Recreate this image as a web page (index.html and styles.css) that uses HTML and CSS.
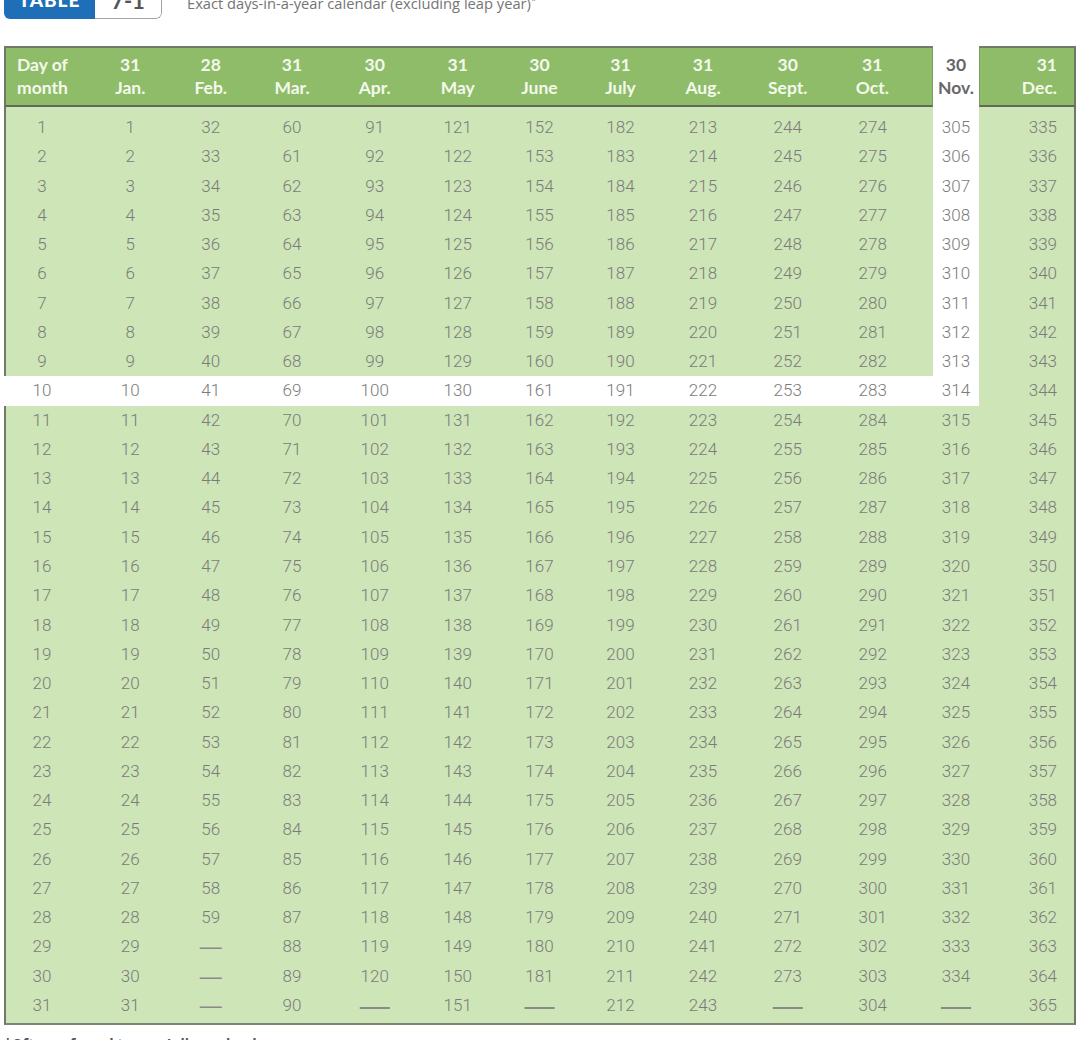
FILE: index.html
```html
<!DOCTYPE html>
<html lang="en">
<head>
<meta charset="utf-8">
<title>Table 7-1</title>
<link rel="stylesheet" href="styles.css">
</head>
<body>
<div class="page">
  <div class="caption">
    <div class="tag"><span class="tag-label">TABLE</span><span class="tag-num">7-1</span></div>
    <div class="caption-text">Exact days-in-a-year calendar (excluding leap year)<sup>*</sup></div>
  </div>
  <div class="grid">
    <div class="row head"><span>Day of<br>month</span><span>31<br>Jan.</span><span>28<br>Feb.</span><span>31<br>Mar.</span><span>30<br>Apr.</span><span>31<br>May</span><span>30<br>June</span><span>31<br>July</span><span>31<br>Aug.</span><span>30<br>Sept.</span><span>31<br>Oct.</span><span>30<br>Nov.</span><span>31<br>Dec.</span></div>
    <div class="row above first"><span>1</span><span>1</span><span>32</span><span>60</span><span>91</span><span>121</span><span>152</span><span>182</span><span>213</span><span>244</span><span>274</span><span>305</span><span>335</span></div>
    <div class="row above"><span>2</span><span>2</span><span>33</span><span>61</span><span>92</span><span>122</span><span>153</span><span>183</span><span>214</span><span>245</span><span>275</span><span>306</span><span>336</span></div>
    <div class="row above"><span>3</span><span>3</span><span>34</span><span>62</span><span>93</span><span>123</span><span>154</span><span>184</span><span>215</span><span>246</span><span>276</span><span>307</span><span>337</span></div>
    <div class="row above"><span>4</span><span>4</span><span>35</span><span>63</span><span>94</span><span>124</span><span>155</span><span>185</span><span>216</span><span>247</span><span>277</span><span>308</span><span>338</span></div>
    <div class="row above"><span>5</span><span>5</span><span>36</span><span>64</span><span>95</span><span>125</span><span>156</span><span>186</span><span>217</span><span>248</span><span>278</span><span>309</span><span>339</span></div>
    <div class="row above"><span>6</span><span>6</span><span>37</span><span>65</span><span>96</span><span>126</span><span>157</span><span>187</span><span>218</span><span>249</span><span>279</span><span>310</span><span>340</span></div>
    <div class="row above"><span>7</span><span>7</span><span>38</span><span>66</span><span>97</span><span>127</span><span>158</span><span>188</span><span>219</span><span>250</span><span>280</span><span>311</span><span>341</span></div>
    <div class="row above"><span>8</span><span>8</span><span>39</span><span>67</span><span>98</span><span>128</span><span>159</span><span>189</span><span>220</span><span>251</span><span>281</span><span>312</span><span>342</span></div>
    <div class="row above"><span>9</span><span>9</span><span>40</span><span>68</span><span>99</span><span>129</span><span>160</span><span>190</span><span>221</span><span>252</span><span>282</span><span>313</span><span>343</span></div>
    <div class="row hl"><span>10</span><span>10</span><span>41</span><span>69</span><span>100</span><span>130</span><span>161</span><span>191</span><span>222</span><span>253</span><span>283</span><span>314</span><span>344</span></div>
    <div class="row"><span>11</span><span>11</span><span>42</span><span>70</span><span>101</span><span>131</span><span>162</span><span>192</span><span>223</span><span>254</span><span>284</span><span>315</span><span>345</span></div>
    <div class="row"><span>12</span><span>12</span><span>43</span><span>71</span><span>102</span><span>132</span><span>163</span><span>193</span><span>224</span><span>255</span><span>285</span><span>316</span><span>346</span></div>
    <div class="row"><span>13</span><span>13</span><span>44</span><span>72</span><span>103</span><span>133</span><span>164</span><span>194</span><span>225</span><span>256</span><span>286</span><span>317</span><span>347</span></div>
    <div class="row"><span>14</span><span>14</span><span>45</span><span>73</span><span>104</span><span>134</span><span>165</span><span>195</span><span>226</span><span>257</span><span>287</span><span>318</span><span>348</span></div>
    <div class="row"><span>15</span><span>15</span><span>46</span><span>74</span><span>105</span><span>135</span><span>166</span><span>196</span><span>227</span><span>258</span><span>288</span><span>319</span><span>349</span></div>
    <div class="row"><span>16</span><span>16</span><span>47</span><span>75</span><span>106</span><span>136</span><span>167</span><span>197</span><span>228</span><span>259</span><span>289</span><span>320</span><span>350</span></div>
    <div class="row"><span>17</span><span>17</span><span>48</span><span>76</span><span>107</span><span>137</span><span>168</span><span>198</span><span>229</span><span>260</span><span>290</span><span>321</span><span>351</span></div>
    <div class="row"><span>18</span><span>18</span><span>49</span><span>77</span><span>108</span><span>138</span><span>169</span><span>199</span><span>230</span><span>261</span><span>291</span><span>322</span><span>352</span></div>
    <div class="row"><span>19</span><span>19</span><span>50</span><span>78</span><span>109</span><span>139</span><span>170</span><span>200</span><span>231</span><span>262</span><span>292</span><span>323</span><span>353</span></div>
    <div class="row"><span>20</span><span>20</span><span>51</span><span>79</span><span>110</span><span>140</span><span>171</span><span>201</span><span>232</span><span>263</span><span>293</span><span>324</span><span>354</span></div>
    <div class="row"><span>21</span><span>21</span><span>52</span><span>80</span><span>111</span><span>141</span><span>172</span><span>202</span><span>233</span><span>264</span><span>294</span><span>325</span><span>355</span></div>
    <div class="row"><span>22</span><span>22</span><span>53</span><span>81</span><span>112</span><span>142</span><span>173</span><span>203</span><span>234</span><span>265</span><span>295</span><span>326</span><span>356</span></div>
    <div class="row"><span>23</span><span>23</span><span>54</span><span>82</span><span>113</span><span>143</span><span>174</span><span>204</span><span>235</span><span>266</span><span>296</span><span>327</span><span>357</span></div>
    <div class="row"><span>24</span><span>24</span><span>55</span><span>83</span><span>114</span><span>144</span><span>175</span><span>205</span><span>236</span><span>267</span><span>297</span><span>328</span><span>358</span></div>
    <div class="row"><span>25</span><span>25</span><span>56</span><span>84</span><span>115</span><span>145</span><span>176</span><span>206</span><span>237</span><span>268</span><span>298</span><span>329</span><span>359</span></div>
    <div class="row"><span>26</span><span>26</span><span>57</span><span>85</span><span>116</span><span>146</span><span>177</span><span>207</span><span>238</span><span>269</span><span>299</span><span>330</span><span>360</span></div>
    <div class="row"><span>27</span><span>27</span><span>58</span><span>86</span><span>117</span><span>147</span><span>178</span><span>208</span><span>239</span><span>270</span><span>300</span><span>331</span><span>361</span></div>
    <div class="row"><span>28</span><span>28</span><span>59</span><span>87</span><span>118</span><span>148</span><span>179</span><span>209</span><span>240</span><span>271</span><span>301</span><span>332</span><span>362</span></div>
    <div class="row"><span>29</span><span>29</span><span class="dash">—</span><span>88</span><span>119</span><span>149</span><span>180</span><span>210</span><span>241</span><span>272</span><span>302</span><span>333</span><span>363</span></div>
    <div class="row"><span>30</span><span>30</span><span class="dash">—</span><span>89</span><span>120</span><span>150</span><span>181</span><span>211</span><span>242</span><span>273</span><span>303</span><span>334</span><span>364</span></div>
    <div class="row last"><span>31</span><span>31</span><span class="dash">—</span><span>90</span><span class="long">—</span><span>151</span><span class="long">—</span><span>212</span><span>243</span><span class="long">—</span><span>304</span><span class="long">—</span><span>365</span></div>
  </div>
  <p class="footnote">*Often referred to as a Julian calendar.</p>
</div>
</body>
</html>
```

FILE: styles.css
```css
html, body {
  margin: 0;
  padding: 0;
  background: #ffffff;
}

.page {
  padding-left: 4px;
  width: 1072px;
  font-family: Roboto, "Liberation Sans", sans-serif;
}

/* caption */
.caption {
  display: flex;
  align-items: flex-start;
  margin-top: -15px;
  height: 34px;
}

.tag {
  display: flex;
  height: 34px;
  border-radius: 0 0 6px 6px;
  overflow: hidden;
  box-sizing: border-box;
}

.tag-label {
  width: 91px;
  background: #1f6fb8;
  color: #ffffff;
  font-family: Lato, "Liberation Sans", sans-serif;
  font-weight: 900;
  font-size: 19px;
  letter-spacing: 1px;
  text-align: center;
  line-height: 30px;
}

.tag-num {
  width: 67px;
  box-sizing: border-box;
  background: #ffffff;
  border: 1.5px solid #a3a3a3;
  border-left: none;
  border-radius: 0 0 6px 0;
  color: #555555;
  font-family: Lato, "Liberation Sans", sans-serif;
  font-weight: 700;
  font-size: 22px;
  text-align: center;
  line-height: 30px;
}

.caption-text {
  margin-left: 25px;
  font-family: "Open Sans", "Liberation Sans", sans-serif;
  font-size: 14.7px;
  color: #757575;
  line-height: 20px;
  padding-top: 6px;
}

.caption-text sup {
  font-size: 9px;
  vertical-align: 5px;
}

/* table grid */
.grid {
  margin-top: 27px;
  display: grid;
  grid-template-columns: 82px 84.5px 80.5px 82px 83.5px 82.5px 81px 81px 84px 85.5px 102.5px 46px 97px;
}

.row {
  display: contents;
}

.row > span {
  display: block;
  box-sizing: border-box;
  background: #cde5b7;
  color: #7b7b7b;
  font-weight: 300;
  font-size: 17px;
  line-height: 29.27px;
  text-align: center;
}

/* header */
.head > span {
  background: #8fbc69;
  color: #f3f9ec;
  font-family: Lato, "Liberation Sans", sans-serif;
  font-weight: 700;
  font-size: 17.5px;
  line-height: 23px;
  padding: 4.5px 0 6.5px;
  border-top: 2px solid #6e7a66;
  border-bottom: 2px solid #5f6b58;
}

.head > span:nth-child(11) {
  border-right: 1px solid #7f9a68;
}

.head > span:nth-child(12) {
  background: #ffffff;
  color: #676767;
  border-top-color: transparent;
  border-bottom-color: transparent;
}

.head > span:nth-child(13) {
  border-left: 1px solid #7f9a68;
}

/* column alignment */
.row > span:nth-child(1) {
  border-left: 2px solid #6e7a66;
  padding-right: 8px;
}

.row > span:nth-child(2) {
  padding-left: 4px;
}

.row > span:nth-child(11) {
  padding-right: 18px;
}

.row > span:nth-child(13) {
  text-align: right;
  padding-right: 17px;
  border-right: 2px solid #6e7a66;
}

.head > span:nth-child(1) {
  text-align: left;
  padding-left: 11px;
  padding-right: 0;
}

/* first / last body rows */
.first > span {
  padding-top: 6px;
}

.last > span {
  padding-bottom: 3px;
  border-bottom: 2px solid #7a8572;
}

/* highlight: Nov column above row 10, and row 10 */
.above > span:nth-child(12) {
  background: #ffffff;
}

.hl > span {
  background: #ffffff;
}

.hl > span:nth-child(1) {
  border-left-color: transparent;
}

.hl > span:nth-child(13) {
  background: #cde5b7;
}

/* dashes */
.row > span.dash,
.row > span.long {
  font-family: "Liberation Sans", sans-serif;
  font-weight: 400;
  color: #8a8a8a;
}

.row > span.dash {
  font-size: 22px;
}

.row > span.long {
  font-size: 30px;
}

/* footnote */
.footnote {
  margin: 10px 0 0 0;
  font-family: "Open Sans", "Liberation Sans", sans-serif;
  font-weight: 700;
  font-size: 14px;
  line-height: 18px;
  color: #555555;
}
```
